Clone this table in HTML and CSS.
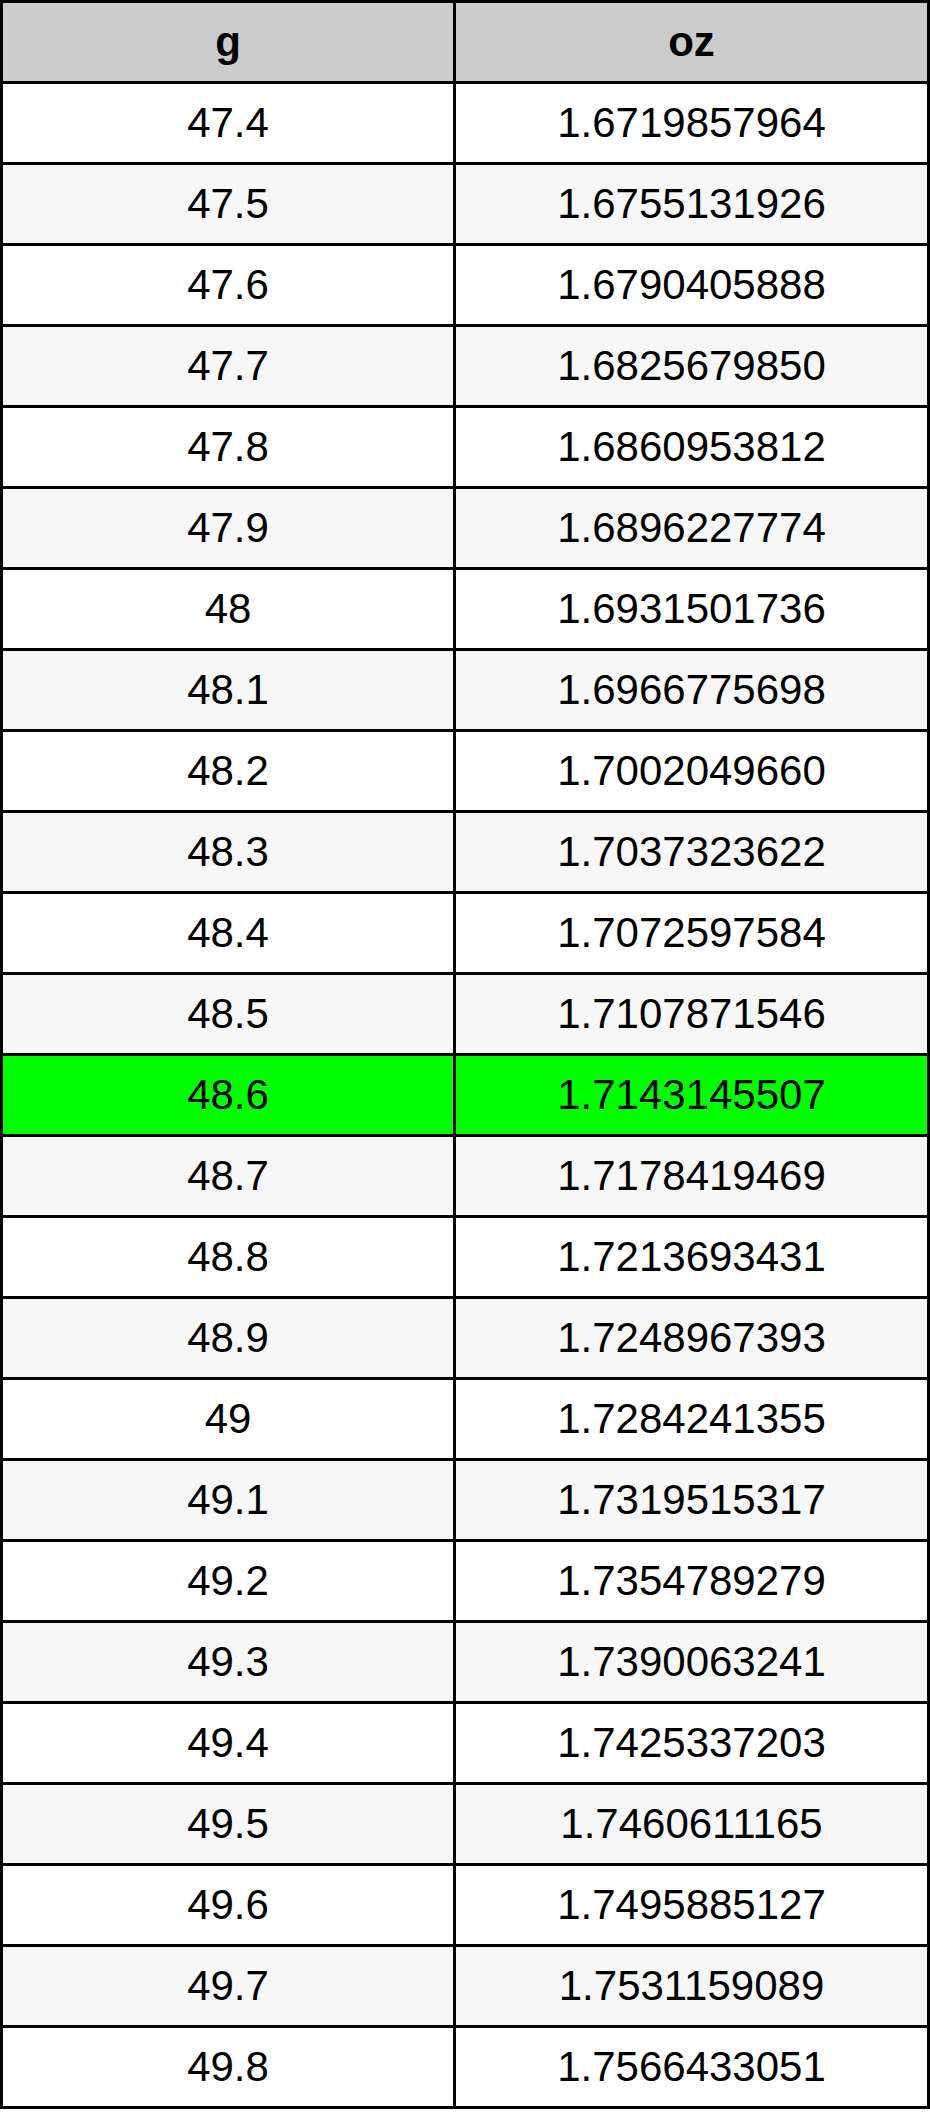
FILE: index.html
```html
<!DOCTYPE html>
<html>
<head>
<meta charset="utf-8">
<link rel="stylesheet" href="styles.css">
</head>
<body>
<div class="table">
  <div class="cell head">g</div><div class="cell head">oz</div>
  <div class="cell">47.4</div><div class="cell">1.6719857964</div>
  <div class="cell alt">47.5</div><div class="cell alt">1.6755131926</div>
  <div class="cell">47.6</div><div class="cell">1.6790405888</div>
  <div class="cell alt">47.7</div><div class="cell alt">1.6825679850</div>
  <div class="cell">47.8</div><div class="cell">1.6860953812</div>
  <div class="cell alt">47.9</div><div class="cell alt">1.6896227774</div>
  <div class="cell">48</div><div class="cell">1.6931501736</div>
  <div class="cell alt">48.1</div><div class="cell alt">1.6966775698</div>
  <div class="cell">48.2</div><div class="cell">1.7002049660</div>
  <div class="cell alt">48.3</div><div class="cell alt">1.7037323622</div>
  <div class="cell">48.4</div><div class="cell">1.7072597584</div>
  <div class="cell alt">48.5</div><div class="cell alt">1.7107871546</div>
  <div class="cell hl">48.6</div><div class="cell hl">1.7143145507</div>
  <div class="cell alt">48.7</div><div class="cell alt">1.7178419469</div>
  <div class="cell">48.8</div><div class="cell">1.7213693431</div>
  <div class="cell alt">48.9</div><div class="cell alt">1.7248967393</div>
  <div class="cell">49</div><div class="cell">1.7284241355</div>
  <div class="cell alt">49.1</div><div class="cell alt">1.7319515317</div>
  <div class="cell">49.2</div><div class="cell">1.7354789279</div>
  <div class="cell alt">49.3</div><div class="cell alt">1.7390063241</div>
  <div class="cell">49.4</div><div class="cell">1.7425337203</div>
  <div class="cell alt">49.5</div><div class="cell alt">1.7460611165</div>
  <div class="cell">49.6</div><div class="cell">1.7495885127</div>
  <div class="cell alt">49.7</div><div class="cell alt">1.7531159089</div>
  <div class="cell">49.8</div><div class="cell">1.7566433051</div>
</div>
</body>
</html>
```

FILE: styles.css
```css
html, body {
  margin: 0;
  padding: 0;
  background: #ffffff;
}
.table {
  display: grid;
  grid-template-columns: 450px 471px;
  grid-auto-rows: 78px;
  gap: 3px;
  padding: 3px;
  background: #000000;
  width: 930px;
  box-sizing: border-box;
  font-family: "Liberation Sans", Arial, sans-serif;
  font-size: 42px;
  color: #000000;
}
.cell {
  display: flex;
  align-items: center;
  justify-content: center;
  background: #ffffff;
}
.cell.head {
  background: #cccccc;
  font-weight: bold;
}
.cell.alt {
  background: #f7f7f7;
}
.cell.hl {
  background: #00ff00;
}
```
